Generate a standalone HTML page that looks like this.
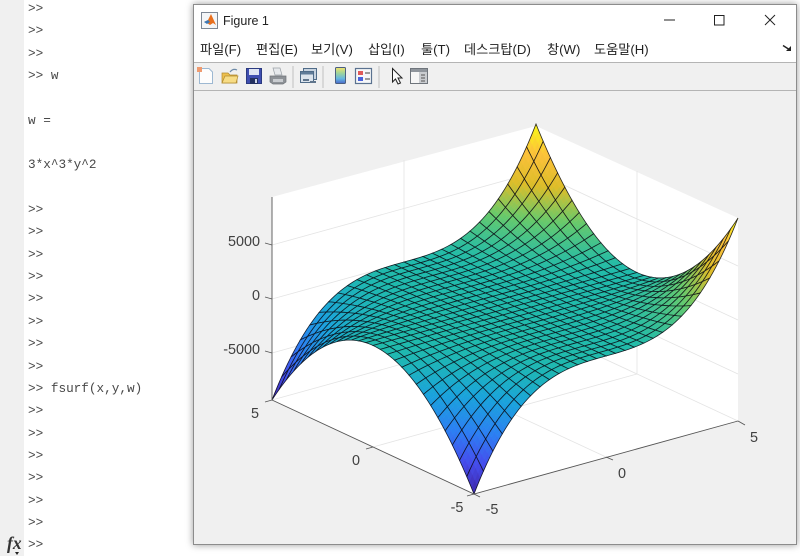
<!DOCTYPE html>
<html>
<head>
<meta charset="utf-8">
<style>
html,body{margin:0;padding:0;width:800px;height:556px;overflow:hidden;background:#fff}
body{filter:blur(.3px)}
#gut{position:absolute;left:0;top:0;width:24px;height:556px;background:#f0f0f0}
#con{position:absolute;left:28px;top:-2px;font:12.7px/22.35px "Liberation Mono",monospace;color:#484848;white-space:pre}
#fx{position:absolute;left:7px;top:533px;font:italic bold 17.5px "Liberation Serif",serif;color:#333}
#tri{position:absolute;left:15px;top:552px;width:0;height:0;border-left:2.5px solid transparent;border-right:2.5px solid transparent;border-top:3px solid #222}
#win{position:absolute;left:193px;top:4px;width:602px;height:539px;background:#f0f0f0;border:1px solid #8c8c8c;box-shadow:0 0 7px rgba(0,0,0,.4)}
#tb{position:absolute;left:0;top:0;width:602px;height:57px;background:#fff;border-bottom:1px solid #b4b4b4}
#bar{position:absolute;left:0;top:58px;width:602px;height:27px;border-bottom:1px solid #b4b4b4}
.t{position:absolute;white-space:nowrap;color:#222}
#title{left:29px;top:8px;font:12.5px/16px "Liberation Sans",sans-serif}
.m{top:36px;font:13.2px/18px "Liberation Sans","Noto Sans CJK KR",sans-serif}
svg{position:absolute;left:0;top:0}
</style>
</head>
<body>
<div id="gut"></div>
<div id="con">&gt;&gt;
&gt;&gt;
&gt;&gt;
&gt;&gt; w

w =

3*x^3*y^2

&gt;&gt;
&gt;&gt;
&gt;&gt;
&gt;&gt;
&gt;&gt;
&gt;&gt;
&gt;&gt;
&gt;&gt;
&gt;&gt; fsurf(x,y,w)
&gt;&gt;
&gt;&gt;
&gt;&gt;
&gt;&gt;
&gt;&gt;
&gt;&gt;
&gt;&gt;</div>
<div id="fx">fx</div><div id="tri"></div>
<div id="win">
  <div id="tb">
    <div class="t" id="title">Figure 1</div>
    <div class="t m" style="left:6px">파일(F)</div>
    <div class="t m" style="left:62px">편집(E)</div>
    <div class="t m" style="left:117px">보기(V)</div>
    <div class="t m" style="left:174px">삽입(I)</div>
    <div class="t m" style="left:227px">툴(T)</div>
    <div class="t m" style="left:270px">데스크탑(D)</div>
    <div class="t m" style="left:353px">창(W)</div>
    <div class="t m" style="left:400px">도움말(H)</div>
  </div>
  <div id="bar"></div>
</div>
<svg id="s" width="800" height="556" viewBox="0 0 800 556" xmlns="http://www.w3.org/2000/svg">
  <!-- title icon -->
  <rect x="201.5" y="12.5" width="16" height="16" fill="#f4f6f8" stroke="#7d8794"/>
  <polygon points="204,22 208,20 211,14 216,25 213,23 210,25 207,23" fill="#e8701f"/>
  <polygon points="204,22 208,20 210,22 207,24" fill="#3a78b8"/>
  <!-- window controls -->
  <path d="M664 20H675" stroke="#222" stroke-width="1"/>
  <rect x="714.5" y="15.5" width="9.5" height="9.5" fill="none" stroke="#222"/>
  <path d="M765 15L775 25M775 15L765 25" stroke="#222" stroke-width="1"/>
  <!-- menu arrow -->
  <path d="M783 45.5L790 50" stroke="#222" stroke-width="1.4"/><polygon points="791,46 791,51 786,51" fill="#222"/>
  <!-- new doc -->
  <path d="M199.5 68.5H209L212.5 72V83.5H199.5Z" fill="#fdfdfd" stroke="#9db8d2"/>
  <rect x="197" y="67" width="5" height="5" fill="#ef9a6f"/>
  <!-- open -->
  <path d="M222 73H228L230 75H237V83H222Z" fill="#eebf4d" stroke="#b08a30" stroke-width=".7"/>
  <path d="M222 83L225 76H238L236 83Z" fill="#f7dc85" stroke="#b08a30" stroke-width=".7"/>
  <path d="M230 72Q233 68 237 70" fill="none" stroke="#6d8aa8" stroke-width="1.2"/>
  <!-- save -->
  <rect x="246.5" y="68.5" width="15" height="15" fill="#3f4eb0" stroke="#2b3a80"/>
  <rect x="249" y="69" width="10" height="6" fill="#dfe5f3"/>
  <rect x="250" y="78" width="8" height="6" fill="#23305f"/>
  <rect x="255" y="79" width="2" height="4" fill="#cfd6e6"/>
  <!-- print -->
  <path d="M273 68H280L282 75H275Z" fill="#e7e9ec" stroke="#9aa0a6" stroke-width=".7"/>
  <path d="M270 76H286V82L283 84H273L270 82Z" fill="#8e9297" stroke="#6f7378" stroke-width=".7"/>
  <rect x="273" y="79" width="10" height="3" fill="#c9ccd0"/>
  <!-- separators -->
  <path d="M293 66V88M323 66V88M379 66V88" stroke="#c0c0c0" stroke-width="1"/>
  <!-- link -->
  <rect x="303.5" y="68.5" width="13" height="11" fill="#c7d3e0" stroke="#4f6b88"/>
  <rect x="300.5" y="71.5" width="13" height="11" fill="#dbe3ec" stroke="#4f6b88"/>
  <rect x="301" y="72" width="12" height="2.5" fill="#5f7b98"/>
  <path d="M303 80H309M310 82H316" stroke="#60758c" stroke-width="2"/>
  <!-- colorbar -->
  <defs><linearGradient id="cb" x1="0" y1="0" x2="0" y2="1"><stop offset="0" stop-color="#f4e36b"/><stop offset=".35" stop-color="#9fd49a"/><stop offset=".7" stop-color="#64b6e2"/><stop offset="1" stop-color="#4a66c8"/></linearGradient></defs>
  <rect x="335.5" y="67.5" width="10" height="16" rx="1" fill="url(#cb)" stroke="#4a5f80"/>
  <!-- legend -->
  <rect x="355.5" y="68.5" width="16" height="15" fill="#f6f7f9" stroke="#5b7290" stroke-width="1.2"/>
  <rect x="358" y="71" width="5" height="4" fill="#e05a5a"/><rect x="358" y="77" width="5" height="4" fill="#4a62dc"/>
  <path d="M365 73H370M365 79H370" stroke="#666" stroke-width="1.3"/>
  <!-- pointer -->
  <path d="M392.5 68.5V82L395.5 79L398 84L400.5 83L398 78H402Z" fill="#fafafa" stroke="#222" stroke-width="1"/>
  <!-- panel -->
  <rect x="410.5" y="68.5" width="17" height="15" fill="#f6f6f6" stroke="#6f757c"/>
  <rect x="411" y="69" width="16" height="3" fill="#8f959c"/>
  <rect x="419" y="72" width="8" height="11" fill="#c9ccd0"/>
  <path d="M421 75H425M421 78H425M421 81H425" stroke="#555" stroke-width="1"/>
  <!-- plot box -->
  <polygon points="272,400 474,494 738,421 738,218 536,126 272,197" fill="#fff"/>
  <g id="grid" stroke="#e4e4e4" stroke-width=".8" fill="none"></g>
  <g id="surf"></g>
  <g stroke="#555" stroke-width=".9" fill="none">
    <path d="M272 197V400L474 494L738 421"/>
    <path d="M265 243L272 245M265 297L272 299M265 351L272 353M265 402L272 400"/>
    <path d="M366 449L373 447M467 496L474 494M480 497L474 494M606 457L613 460M738 421L745 425"/>
  </g>
  <g font-family="'Liberation Sans',sans-serif" font-size="14.4" fill="#404040">
    <text x="260" y="246" text-anchor="end">5000</text>
    <text x="260" y="300" text-anchor="end">0</text>
    <text x="260" y="354" text-anchor="end">-5000</text>
    <text x="255" y="418" text-anchor="middle">5</text>
    <text x="356" y="465" text-anchor="middle">0</text>
    <text x="457" y="512" text-anchor="middle">-5</text>
    <text x="492" y="514" text-anchor="middle">-5</text>
    <text x="622" y="478" text-anchor="middle">0</text>
    <text x="754" y="442" text-anchor="middle">5</text>
  </g>
</svg>
<script>
(function(){
var NS="http://www.w3.org/2000/svg",N=28,S=3,Z=9375;
function P(x,y,z){var u=(x+5)/10,v=(5-y)/10;return [272+264*u+202*v,400-73*u+94*v-(z+Z)/(2*Z)*203];}
function F(x,y){return 3*x*x*x*y*y;}
var st=[[0,.2422,.1504,.6603],[.125,.27,.3,.93],[.25,.17,.5,.95],[.375,.1,.64,.86],[.5,.12,.73,.67],[.625,.40,.79,.42],[.75,.8634,.7406,.1596],[.875,.9892,.7536,.2285],[1,.9769,.9839,.0805]];
function C(t){t=Math.max(0,Math.min(1,t));for(var i=0;i<8;i++){if(t<=st[i+1][0]){var f=(t-st[i][0])/.125,r=[];for(var k=1;k<4;k++)r.push(Math.round(255*(st[i][k]+(st[i+1][k]-st[i][k])*f)));return "rgb("+r+")";}}return "rgb(249,251,21)";}
function pt(p){return p[0].toFixed(2)+" "+p[1].toFixed(2);}
function add(par,d,fill,stroke,w){var e=document.createElementNS(NS,"path");e.setAttribute("d",d);e.setAttribute("fill",fill);e.setAttribute("stroke",stroke);e.setAttribute("stroke-width",w);par.appendChild(e);}
var g=document.getElementById("grid"),d="";
[[[373,447],[637,374]],[[404,363],[606,457]],[[404,363],[404,160]],[[637,374],[637,171]],
 [[272,245],[536,172]],[[272,299],[536,226]],[[272,353],[536,280]],
 [[536,172],[738,266]],[[536,226],[738,320]],[[536,280],[738,374]],[[536,327],[536,124]],[[272,400],[536,327]],[[536,327],[738,421]]
].forEach(function(l){d+="M"+l[0][0]+" "+l[0][1]+"L"+l[1][0]+" "+l[1][1];});
add(g,d,"none","#e4e4e4",.8);
var s=document.getElementById("surf"),h=10/N,f=document.createDocumentFragment();
for(var i=N-1;i>=0;i--){for(var j=N-1;j>=0;j--){
  var x0=-5+i*h,y0=-5+j*h;
  for(var a=S-1;a>=0;a--){for(var b=S-1;b>=0;b--){
    var xa=x0+a*h/S,ya=y0+b*h/S,xb=xa+h/S,yb=ya+h/S;
    var z=(F(xa,ya)+F(xb,ya)+F(xb,yb)+F(xa,yb))/4,c=C((z+Z)/(2*Z));
    add(f,"M"+pt(P(xa,ya,F(xa,ya)))+"L"+pt(P(xb,ya,F(xb,ya)))+"L"+pt(P(xb,yb,F(xb,yb)))+"L"+pt(P(xa,yb,F(xa,yb)))+"Z",c,c,.4);
  }}
  var x1=x0+h,y1=y0+h,q="";
  var pp=[];
  for(var k=0;k<=S;k++)pp.push(P(x0+k*h/S,y0,F(x0+k*h/S,y0)));
  for(k=1;k<=S;k++)pp.push(P(x1,y0+k*h/S,F(x1,y0+k*h/S)));
  for(k=1;k<=S;k++)pp.push(P(x1-k*h/S,y1,F(x1-k*h/S,y1)));
  for(k=1;k<=S;k++)pp.push(P(x0,y1-k*h/S,F(x0,y1-k*h/S)));
  q="M"+pp.map(pt).join("L")+"Z";
  add(f,q,"none","rgba(10,10,20,.85)",.8);
}}
s.appendChild(f);
})();
</script>
</body>
</html>
